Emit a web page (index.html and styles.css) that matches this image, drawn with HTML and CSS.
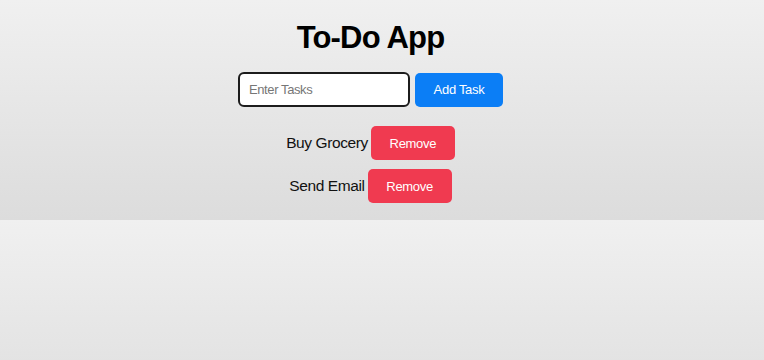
FILE: index.html
```html
<!DOCTYPE html>
<html lang="en">
<head>
<meta charset="utf-8">
<title>To-Do App</title>
<link rel="stylesheet" href="styles.css">
</head>
<body>
<div class="app">
  <h1 class="title">To-Do App</h1>
  <div class="entry">
    <input class="task-input" type="text" placeholder="Enter Tasks">
    <button class="btn btn-add">Add Task</button>
  </div>
  <ul class="tasks">
    <li class="task"><span class="task-text">Buy Grocery</span><button class="btn btn-remove">Remove</button></li>
    <li class="task"><span class="task-text">Send Email</span><button class="btn btn-remove">Remove</button></li>
  </ul>
</div>
</body>
</html>
```
FILE: styles.css
```css
body {
  margin: 0;
  font-family: "Liberation Sans", Arial, sans-serif;
  background: linear-gradient(#f0f0f0, #dcdcdc);
  color: #000;
}

.app {
  width: 741px;
  padding: 21px 0 17px;
  text-align: center;
}

.title {
  margin: 0 0 17px;
  font-size: 31px;
  line-height: 34px;
  font-weight: bold;
  letter-spacing: -0.8px;
}

.entry {
  display: flex;
  justify-content: center;
  align-items: center;
  gap: 5px;
}

.task-input {
  box-sizing: border-box;
  width: 172px;
  height: 35px;
  border: 2px solid #1c1c1c;
  border-radius: 6px;
  padding: 0 9px;
  background: #fff;
  font-family: "Liberation Sans", Arial, sans-serif;
  font-size: 13px;
  letter-spacing: -0.4px;
  outline: none;
}

.task-input::placeholder {
  color: #767676;
}

.btn {
  box-sizing: border-box;
  height: 34px;
  border: none;
  border-radius: 5px;
  color: #fff;
  font-family: "Liberation Sans", Arial, sans-serif;
  font-size: 13px;
  letter-spacing: -0.3px;
  padding: 0;
  cursor: pointer;
}

.btn-add {
  width: 88px;
  background: #0b7ef6;
}

.btn-remove {
  width: 84px;
  background: #f03a50;
}

.tasks {
  list-style: none;
  margin: 19px 0 0;
  padding: 0;
  display: flex;
  flex-direction: column;
  gap: 9px;
}

.task {
  display: flex;
  justify-content: center;
  align-items: center;
  gap: 3px;
  font-size: 15.5px;
  letter-spacing: -0.4px;
  color: #111;
}
```
